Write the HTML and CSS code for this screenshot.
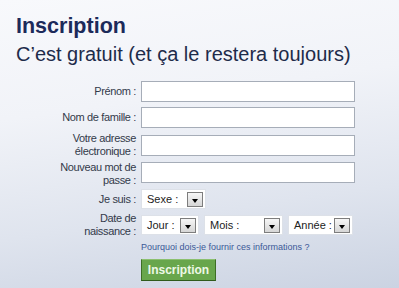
FILE: index.html
```html
<!DOCTYPE html>
<html lang="fr">
<head>
<meta charset="utf-8">
<title>Inscription</title>
<link rel="stylesheet" href="styles.css">
</head>
<body>
<div class="page">
  <h1 class="title">Inscription</h1>
  <p class="subtitle">C’est gratuit (et ça le restera toujours)</p>
  <form class="form">
    <label class="lbl">Prénom :</label>
    <input class="txt" type="text">
    <label class="lbl">Nom de famille :</label>
    <input class="txt" type="text">
    <label class="lbl">Votre adresse électronique :</label>
    <input class="txt" type="text">
    <label class="lbl">Nouveau mot de passe :</label>
    <input class="txt txt-top" type="password">
    <label class="lbl">Je suis :</label>
    <div class="sels">
      <div class="sel sel-sexe"><span class="sel-text">Sexe :</span><span class="arrow"></span></div>
    </div>
    <label class="lbl">Date de naissance :</label>
    <div class="sels">
      <div class="sel sel-jour"><span class="sel-text">Jour :</span><span class="arrow"></span></div>
      <div class="sel sel-mois"><span class="sel-text">Mois :</span><span class="arrow"></span></div>
      <div class="sel sel-annee"><span class="sel-text">Année :</span><span class="arrow"></span></div>
    </div>
    <span></span>
    <a class="why" href="#">Pourquoi dois-je fournir ces informations ?</a>
    <span></span>
    <div class="btn-row"><button class="btn" type="button">Inscription</button></div>
  </form>
</div>
</body>
</html>
```
FILE: styles.css
```css
html, body {
  margin: 0;
  padding: 0;
  height: 100%;
}
body {
  background: linear-gradient(172deg, #f8f9fc 0%, #f1f3f8 35%, #dfe4ee 70%, #cbd3e2 100%);
  font-family: "Liberation Sans", Arial, sans-serif;
  overflow: hidden;
}
.page {
  padding: 14px 0 0 16px;
}
.title {
  margin: 0;
  font-size: 21.5px;
  font-weight: bold;
  line-height: 24px;
  color: #1c2a5a;
}
.subtitle {
  margin: 3px 0 0 0;
  font-size: 20px;
  line-height: 26px;
  color: #1e2b4a;
}
.form {
  margin: 13px 0 0 40px;
  display: grid;
  grid-template-columns: 80px 214px;
  grid-template-rows: 23px 23px 26px 25px 20px 26px 12px auto;
  column-gap: 5px;
  row-gap: 3px;
  align-items: center;
}
.lbl {
  text-align: right;
  font-size: 11px;
  letter-spacing: -0.35px;
  line-height: 13px;
  color: #333a4a;
}
.txt {
  box-sizing: border-box;
  width: 214px;
  height: 21px;
  margin: 0;
  border: 1px solid #a6adb8;
  background: #fff;
  padding: 0 3px;
}
.txt-top {
  align-self: start;
  margin-top: 1px;
}
.sels {
  display: flex;
  gap: 5px;
}
.sel {
  box-sizing: border-box;
  height: 20px;
  border: 1px solid #dde1e8;
  background: #fff;
  display: flex;
  align-items: center;
  justify-content: space-between;
  padding: 0 2px 0 5px;
  font-size: 11px;
  color: #222;
}
.sel-sexe { width: 65px; }
.sel-jour { width: 58px; }
.sel-mois { width: 79px; }
.sel-annee { width: 65px; }
.arrow {
  box-sizing: border-box;
  width: 16px;
  height: 15px;
  border: 1px solid #7d7d7d;
  background: linear-gradient(#f6f6f6, #d6d6d6);
  position: relative;
}
.arrow::after {
  content: "";
  position: absolute;
  left: 4px;
  top: 6px;
  border-left: 3.5px solid transparent;
  border-right: 3.5px solid transparent;
  border-top: 4px solid #000;
}
.why {
  font-size: 9px;
  color: #3b5998;
  text-decoration: none;
  line-height: 12px;
}
.btn-row {
  padding-top: 3px;
  display: flex;
}
.btn {
  box-sizing: border-box;
  width: 75px;
  height: 22px;
  background: #68a64c;
  border: 1px solid;
  border-color: #8cc06f #3c6e25 #2f5a1b #3c6e25;
  color: #eef8e6;
  font-family: "Liberation Sans", Arial, sans-serif;
  font-weight: bold;
  font-size: 12px;
  padding: 0;
}
```
